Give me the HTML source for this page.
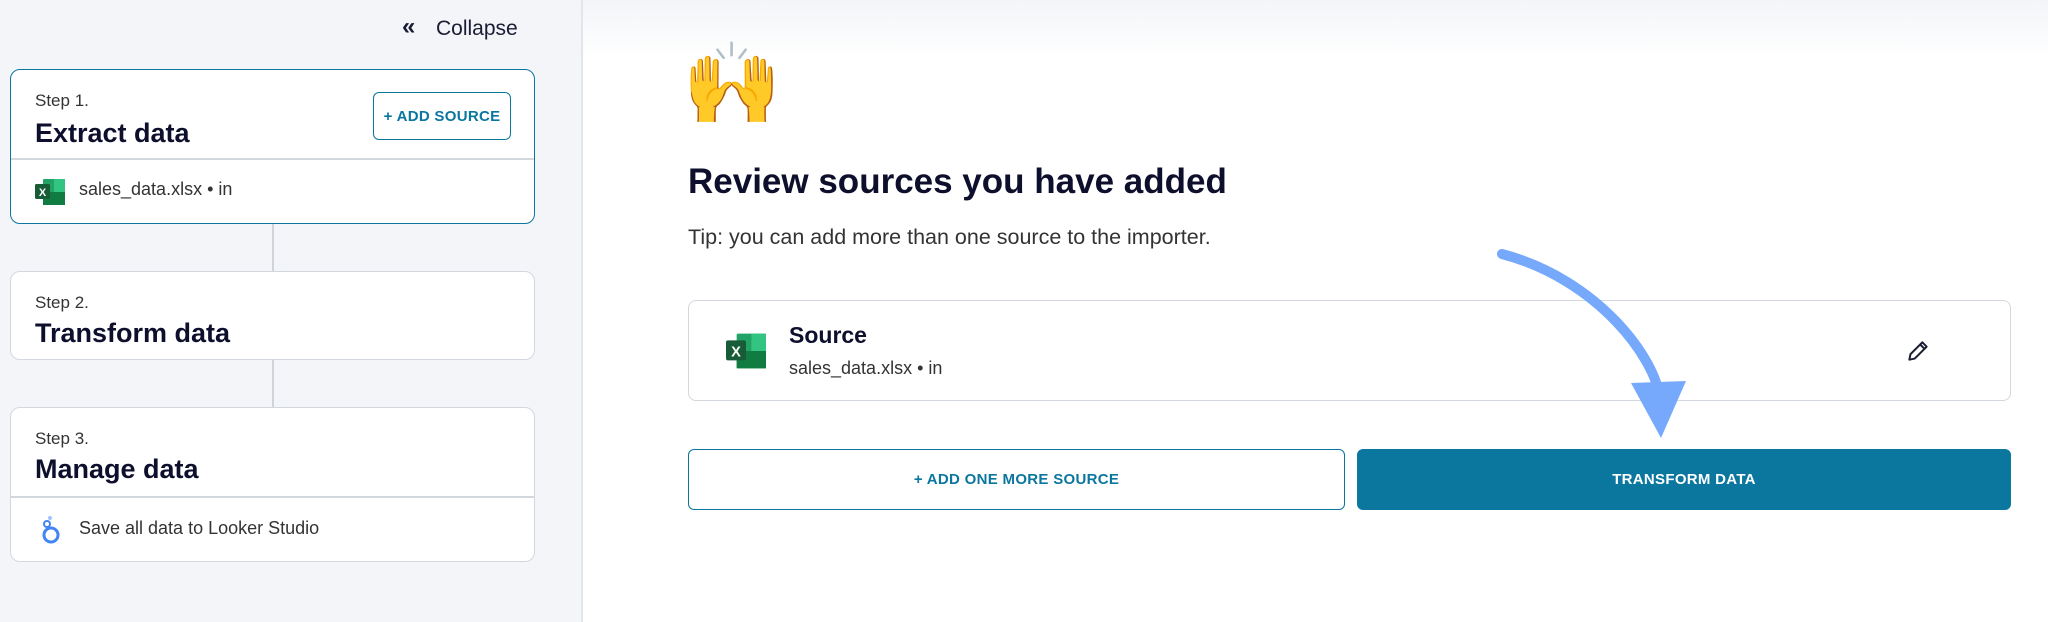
<!DOCTYPE html>
<html><head><meta charset="utf-8"><style>
*{box-sizing:border-box;margin:0;padding:0}
body{width:2048px;height:622px;overflow:hidden;background:#fff;font-family:"Liberation Sans",Arial,sans-serif;color:#0d0f2c;position:relative}
.side{position:absolute;left:0;top:0;width:583px;height:622px;background:#f3f5f8;border-right:2px solid #e2e6ea}
.topfade{position:absolute;left:583px;top:0;right:0;height:60px;background:linear-gradient(#f3f5f8,#fff)}
.card{position:absolute;left:10px;width:525px;background:#fff;border:1.5px solid #d3d8de;border-radius:10px}
.step{position:absolute;left:24px;font-size:17px;color:#333}
.title{position:absolute;left:24px;font-size:27px;font-weight:bold;color:#0d0f2c}
.div{position:absolute;left:0;right:0;height:1.5px;background:#d3d8de}
.line{position:absolute;left:272px;width:1.5px;background:#cfd4da}
.abs{position:absolute}
.btn{position:absolute;border-radius:6px;font-weight:bold;font-size:15px;display:flex;align-items:center;justify-content:center;letter-spacing:.3px}
</style></head><body>
<div class="side"></div>
<div class="topfade"></div>
<div class="abs" style="left:402px;top:13px;font-size:24px;font-weight:bold;color:#1a1c33">«</div>
<div class="abs" style="left:436px;top:17px;font-size:21px;color:#1a1c33">Collapse</div>

<div class="line" style="top:224px;height:47px"></div>
<div class="line" style="top:360px;height:47px"></div>

<div class="card" style="top:69px;height:155px;border-color:#0b769e">
 <div class="step" style="top:21px">Step 1.</div>
 <div class="title" style="top:48px">Extract data</div>
 <div class="btn" style="left:362px;top:22px;width:138px;height:48px;border:1.5px solid #0b769e;color:#0b769e;font-size:15px">+ ADD SOURCE</div>
 <div class="div" style="top:88px"></div>
 <svg class="abs" style="left:24px;top:109px" width="30" height="26" viewBox="0 0 30 26"><rect x="8" y="0" width="22" height="26" rx="1" fill="#21a366"/><rect x="19" y="0" width="11" height="13" fill="#33c481"/><rect x="8" y="13" width="22" height="13" fill="#107c41"/><rect x="0" y="5" width="15" height="15" rx="1.5" fill="#185c37"/><text x="7.5" y="17" font-size="11" font-weight="bold" fill="#fff" text-anchor="middle" font-family="Liberation Sans">X</text></svg>
 <div class="abs" style="left:68px;top:109px;font-size:18px;color:#333">sales_data.xlsx • in</div>
</div>

<div class="card" style="top:271px;height:89px">
 <div class="step" style="top:21px">Step 2.</div>
 <div class="title" style="top:46px">Transform data</div>
</div>

<div class="card" style="top:407px;height:155px">
 <div class="step" style="top:21px">Step 3.</div>
 <div class="title" style="top:46px">Manage data</div>
 <div class="div" style="top:88px"></div>
 <svg class="abs" style="left:28px;top:107px" width="22" height="30" viewBox="0 0 22 30"><circle cx="12" cy="20" r="7" fill="none" stroke="#4285f4" stroke-width="3"/><circle cx="8" cy="9" r="3" fill="none" stroke="#4285f4" stroke-width="2"/><circle cx="11" cy="3" r="2" fill="#a0c3ff"/></svg>
 <div class="abs" style="left:68px;top:110px;font-size:18px;color:#333">Save all data to Looker Studio</div>
</div>

<div class="abs" style="left:682px;top:36px;font-size:80px;line-height:96px;font-family:'Noto Color Emoji',sans-serif">🙌</div>
<div class="abs" style="left:688px;top:162px;font-size:35px;font-weight:bold;color:#0d0f2c">Review sources you have added</div>
<div class="abs" style="left:688px;top:225px;font-size:21.5px;color:#333">Tip: you can add more than one source to the importer.</div>

<div class="abs" style="left:688px;top:300px;width:1323px;height:101px;border:1.5px solid #d3d8de;border-radius:8px;background:#fff"></div>
<svg class="abs" style="left:726px;top:333px" width="40" height="36" viewBox="0 0 30 26"><rect x="8" y="0" width="22" height="26" rx="1" fill="#21a366"/><rect x="19" y="0" width="11" height="13" fill="#33c481"/><rect x="8" y="13" width="22" height="13" fill="#107c41"/><rect x="0" y="5" width="15" height="15" rx="1.5" fill="#185c37"/><text x="7.5" y="17" font-size="11" font-weight="bold" fill="#fff" text-anchor="middle" font-family="Liberation Sans">X</text></svg>
<div class="abs" style="left:789px;top:322px;font-size:23px;font-weight:bold">Source</div>
<div class="abs" style="left:789px;top:358px;font-size:18px;color:#333">sales_data.xlsx • in</div>
<svg class="abs" style="left:1905px;top:338px" width="26" height="26" viewBox="0 0 24 24"><path d="M4 20l1-5L16 4l4 4L9 19z M14 6l4 4" fill="none" stroke="#1a1c33" stroke-width="1.8" stroke-linejoin="round"/></svg>

<div class="btn" style="left:688px;top:449px;width:657px;height:61px;border:1.5px solid #0b769e;color:#0b769e;background:#fff">+ ADD ONE MORE SOURCE</div>
<div class="btn" style="left:1357px;top:449px;width:654px;height:61px;background:#0b769e;color:#fff">TRANSFORM DATA</div>

<svg class="abs" style="left:0;top:0" width="2048" height="622"><path d="M1502 254 C1600 280 1655 360 1659 395" fill="none" stroke="#76a9fb" stroke-width="10" stroke-linecap="round"/><path d="M1631 383 L1686 381 L1661 438 Z" fill="#76a9fb"/></svg>
</body></html>
